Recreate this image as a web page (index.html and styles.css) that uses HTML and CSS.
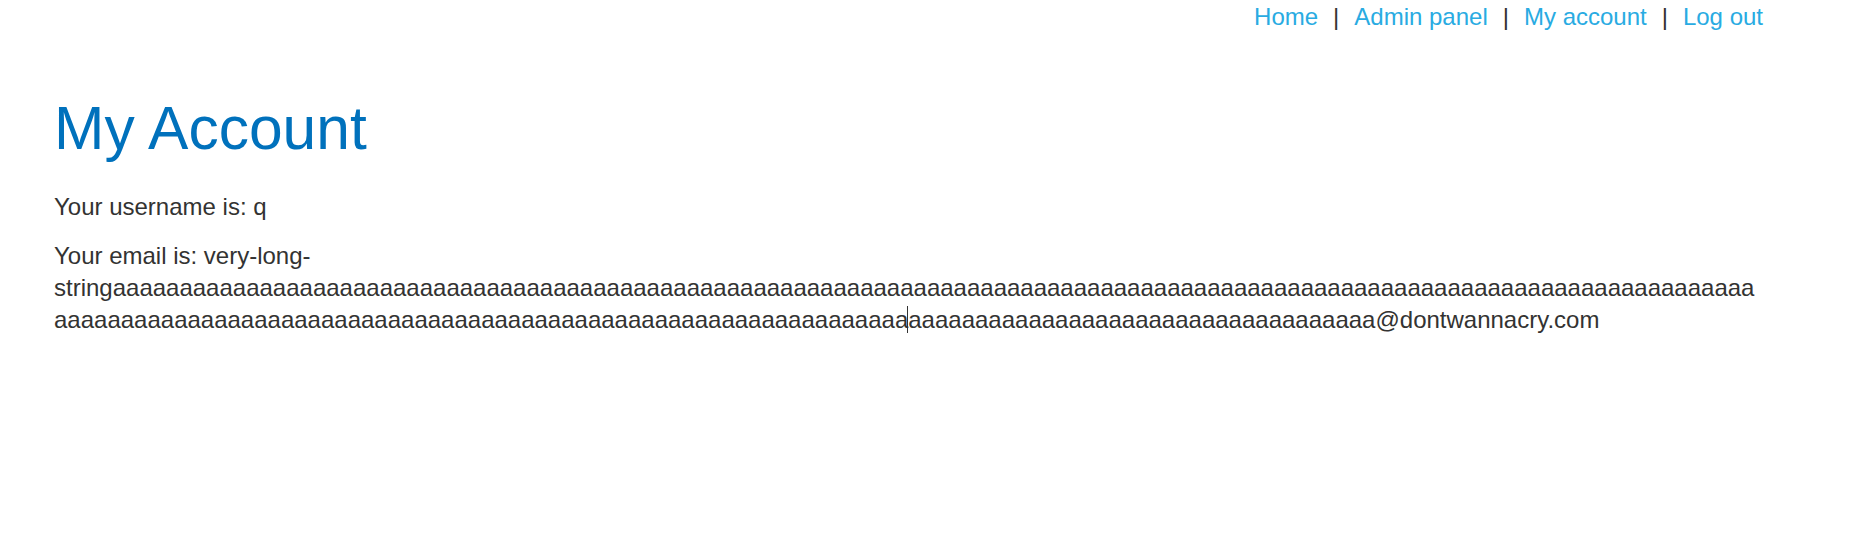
FILE: index.html
```html
<!DOCTYPE html>
<html lang="en">

<head>
    <meta charset="UTF-8">
    <meta name="viewport" content="width=device-width, initial-scale=1.0">
    <title>My Account</title>
    <link rel="stylesheet" href="styles.css">
</head>

<body>
    <div class="container">
        <header class="top-links">
            <a href="/">Home</a><span class="sep">|</span>
            <a href="/admin">Admin panel</a><span class="sep">|</span>
            <a href="/my-account">My account</a><span class="sep">|</span>
            <a href="/logout">Log out</a>
        </header>

        <h1>My Account</h1>
        <p>Your username is: q</p>
        <p class="email">Your email is: very-long-stringaaaaaaaaaaaaaaaaaaaaaaaaaaaaaaaaaaaaaaaaaaaaaaaaaaaaaaaaaaaaaaaaaaaaaaaaaaaaaaaaaaaaaaaaaaaaaaaaaaaaaaaaaaaaaaaaaaaaaaaaaaaaaaaaaaaaaaaaaaaaaaaaaaaaaaaaaaaaaaaaaaaaaaaaaaaaaaaaaaaaaaaaaaa<span class="caret"></span>aaaaaaaaaaaaaaaaaaaaaaaaaaaaaaaaaaa@dontwannacry.com</p>
    </div>
</body>

</html>
```

FILE: styles.css
```css
body {
    margin: 0;
    font-family: "Liberation Sans", Arial, sans-serif;
    font-size: 24px;
    line-height: 32px;
    color: #333332;
    background-color: #fff;
}

.container {
    padding: 1px 88px 0 54px;
}

.top-links {
    display: flex;
    justify-content: flex-end;
}

.top-links a {
    color: #29abe2;
    text-decoration: none;
}

.top-links .sep {
    color: #333332;
    margin: 0 15px;
}

h1 {
    color: #0071bc;
    font-size: 60.5px;
    font-weight: normal;
    line-height: normal;
    margin: 60px 0 28px;
}

p {
    margin: 0 0 17px;
}

.email {
    word-wrap: break-word;
}

.caret {
    border-left: 1px solid #333332;
    margin-left: -1px;
}
```
